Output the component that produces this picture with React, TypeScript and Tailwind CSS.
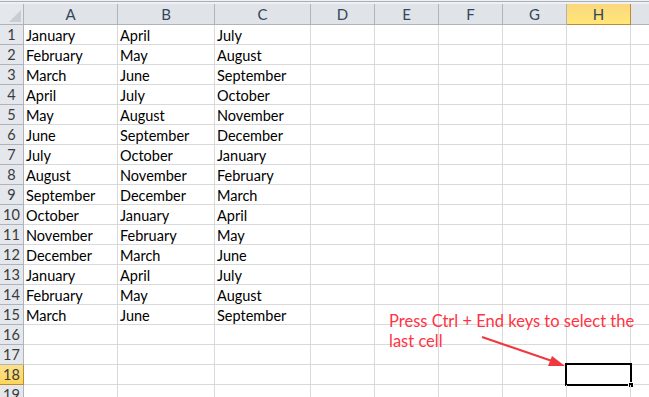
import React from "react"

const cols = ["A", "B", "C", "D", "E", "F", "G", "H"]
const widths = ["w-[94px]", "w-[97px]", "w-[96px]", "w-[64px]", "w-[64px]", "w-[64px]", "w-[64px]", "w-[64px]"]

const data: string[][] = [
  ["January", "April", "July"],
  ["February", "May", "August"],
  ["March", "June", "September"],
  ["April", "July", "October"],
  ["May", "August", "November"],
  ["June", "September", "December"],
  ["July", "October", "January"],
  ["August", "November", "February"],
  ["September", "December", "March"],
  ["October", "January", "April"],
  ["November", "February", "May"],
  ["December", "March", "June"],
  ["January", "April", "July"],
  ["February", "May", "August"],
  ["March", "June", "September"],
]

const font = { fontFamily: "Lato, 'Open Sans', sans-serif" }

function Row({ n }: { n: number }) {
  const values = data[n - 1] ?? []
  const rowSel = n === 18
  return (
    <div className="flex h-[20px]">
      <div
        className={
          rowSel
            ? "w-[24px] shrink-0 border-r border-b border-[#c28a30] bg-gradient-to-b from-[#fbe08c] to-[#fdd55a] text-center text-[14.5px] leading-[20px] text-[#3b3b3b]"
            : "w-[24px] shrink-0 border-r border-b border-[#b0b4ba] bg-[#e4e7eb] text-center text-[14.5px] leading-[20px] text-[#3b3b3b]"
        }
      >
        {n}
      </div>
      {cols.map((c, i) => (
        <div
          key={c}
          className={`${widths[i]} relative shrink-0 border-r border-b border-[#d9d9d9] pl-[2px] pt-[1px] text-[14.5px] leading-[19px] text-black whitespace-nowrap`}
        >
          {values[i] ?? ""}
          {rowSel && c === "H" && (
            <div className="absolute -left-[2px] -top-[2px] h-[23px] w-[67px] border-[2.5px] border-black">
              <div className="absolute -bottom-[4px] -right-[4px] h-[6px] w-[6px] bg-black border border-white" />
            </div>
          )}
        </div>
      ))}
      <div className="flex-1 border-b border-[#d9d9d9]" />
    </div>
  )
}

export default function App() {
  return (
    <div className="relative h-[397px] w-[649px] overflow-hidden bg-white" style={font}>
      {/* top edge */}
      <div className="h-[1px] bg-[#eef0f3]" />
      <div className="h-[1px] bg-[#a9b0ba]" />
      <div className="h-[2px] bg-[#eef0f3]" />

      {/* column headers */}
      <div className="flex h-[21px]">
        <div className="relative w-[24px] shrink-0 border-r border-b border-[#b0b4ba] bg-[#e4e7eb]">
          <svg className="absolute right-[2px] bottom-[2px]" width="12" height="12" viewBox="0 0 12 12">
            <polygon points="12,0 12,12 0,12" fill="#c9cdd2" />
          </svg>
        </div>
        {cols.map((c, i) => (
          <div
            key={c}
            className={
              c === "H"
                ? `${widths[i]} shrink-0 border-r border-b border-[#c28a30] bg-gradient-to-b from-[#fbd77e] to-[#ffe777] text-center text-[15px] leading-[20px] text-[#33465c]`
                : `${widths[i]} shrink-0 border-r border-b border-[#b0b4ba] bg-[#e0e4e8] text-center text-[15px] leading-[20px] text-[#33465c]`
            }
          >
            {c}
          </div>
        ))}
        <div className="flex-1 border-b border-[#b0b4ba] bg-[#e0e4e8]" />
      </div>

      {Array.from({ length: 19 }, (_, i) => (
        <Row key={i} n={i + 1} />
      ))}

      {/* annotation */}
      <div className="absolute left-[389px] top-[311px] w-[256px] text-[16.5px] leading-[20px] text-[#ff3344]">
        Press Ctrl + End keys to select the last cell
      </div>
      <svg className="absolute left-0 top-0" width="649" height="397">
        <line x1="482" y1="337" x2="555" y2="362" stroke="#f0393f" strokeWidth="2" />
        <polygon points="565,366 548,366 552,356" fill="#f0393f" />
      </svg>
    </div>
  )
}
